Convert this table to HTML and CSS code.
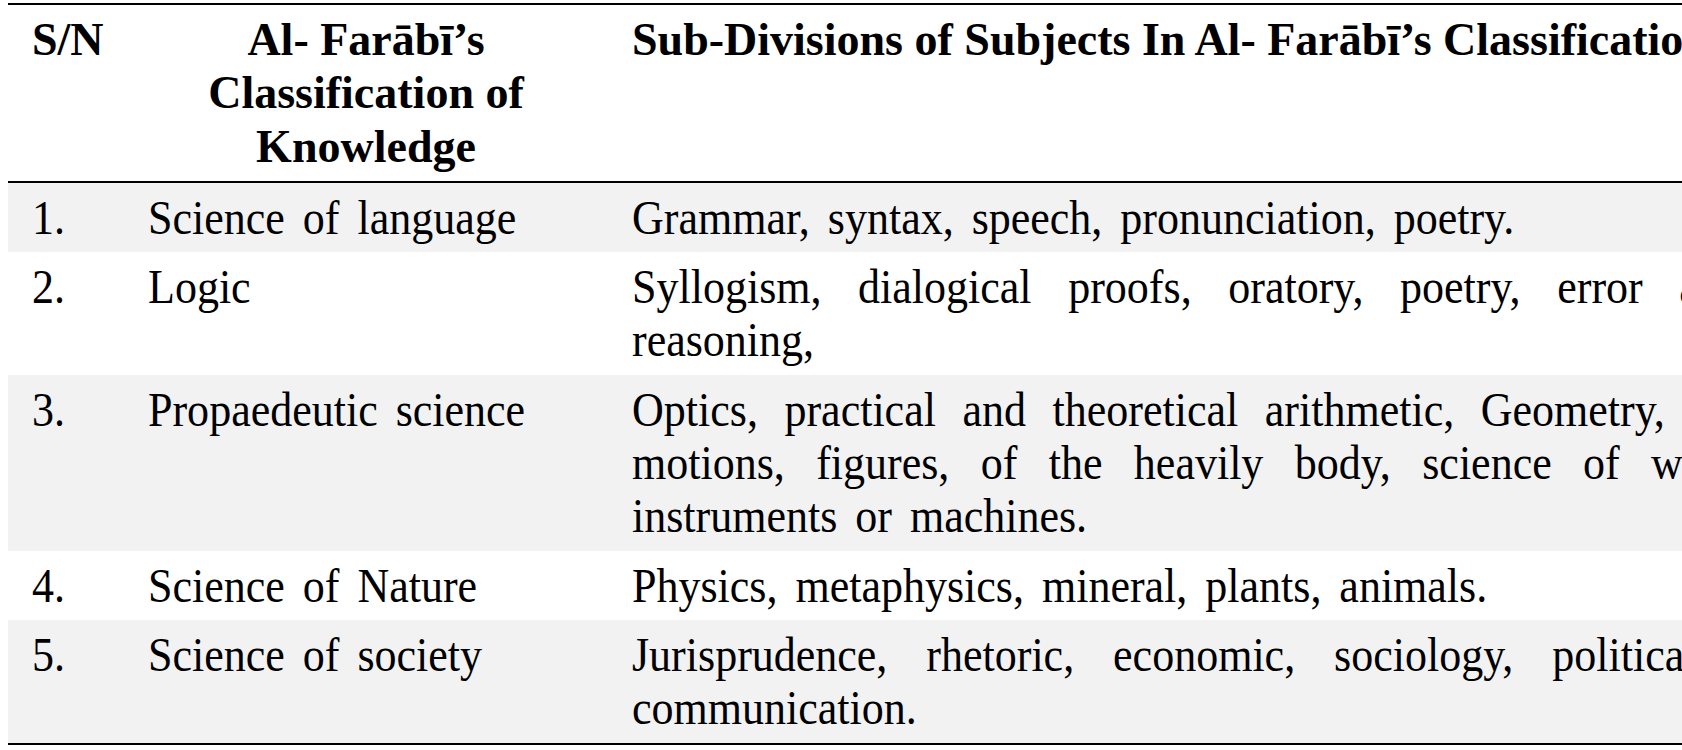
FILE: index.html
```html
<!DOCTYPE html>
<html lang="en">
<head>
<meta charset="utf-8">
<title>Al-Farābī's Classification of Knowledge</title>
<link rel="stylesheet" href="styles.css">
</head>
<body>
<table class="kt">
  <colgroup>
    <col class="c-sn">
    <col class="c-cls">
    <col class="c-sub">
  </colgroup>
  <thead>
    <tr class="head">
      <th class="h-sn">S/N</th>
      <th class="h-cls">Al- Farābī’s Classification of Knowledge</th>
      <th class="h-sub">Sub-Divisions of Subjects In Al- Farābī’s Classification</th>
    </tr>
  </thead>
  <tbody>
    <tr class="shade">
      <td><div class="cond cond-sn">1.</div></td>
      <td><div class="cond cond-cls">Science of language</div></td>
      <td><div class="cond cond-sub">Grammar, syntax, speech, pronunciation, poetry.</div></td>
    </tr>
    <tr>
      <td><div class="cond cond-sn">2.</div></td>
      <td><div class="cond cond-cls">Logic</div></td>
      <td><div class="cond cond-sub">Syllogism, dialogical proofs, oratory, poetry, error and a reasoning,</div></td>
    </tr>
    <tr class="shade">
      <td><div class="cond cond-sn">3.</div></td>
      <td><div class="cond cond-cls">Propaedeutic science</div></td>
      <td><div class="cond cond-sub">Optics, practical and theoretical arithmetic, Geometry, stellar motions, figures, of the heavily body, science of weights, instruments or machines.</div></td>
    </tr>
    <tr>
      <td><div class="cond cond-sn">4.</div></td>
      <td><div class="cond cond-cls">Science of Nature</div></td>
      <td><div class="cond cond-sub">Physics, metaphysics, mineral, plants, animals.</div></td>
    </tr>
    <tr class="shade">
      <td><div class="cond cond-sn">5.</div></td>
      <td><div class="cond cond-cls">Science of society</div></td>
      <td><div class="cond cond-sub">Jurisprudence, rhetoric, economic, sociology, political and communication.</div></td>
    </tr>
  </tbody>
</table>
</body>
</html>
```

FILE: styles.css
```css
html,
body {
  overflow: hidden;
  background: #ffffff;
}

body {
  margin: 3px 0 0 8px;
  font-family: "Liberation Serif", "Times New Roman", serif;
  color: #000000;
}

.kt {
  border-collapse: collapse;
  table-layout: fixed;
  width: 1815px;
  border-top: 2px solid #000000;
  border-bottom: 2px solid #000000;
}

.c-sn { width: 116px; }
.c-cls { width: 484px; }
.c-sub { width: 1215px; }

.kt th,
.kt td {
  padding: 8px 24px;
  vertical-align: top;
  line-height: 53.3px;
}

.head th {
  font-size: 46px;
  font-weight: bold;
  border-bottom: 2px solid #000000;
}

.h-sn { text-align: left; }
.h-cls { text-align: center; }
.h-sub { text-align: left; }

/* body copy: tall, slightly condensed Times-like type */
.cond {
  font-size: 48px;
  font-weight: normal;
  word-spacing: 7.6px;
  transform: scaleX(0.9167);
  transform-origin: 0 0;
}

.cond-sn {
  width: 74px;
  white-space: nowrap;
}

.cond-cls {
  width: 476px;
  white-space: nowrap;
}

.cond-sub {
  width: 1273px;
  text-align: justify;
}

.shade td {
  background: #f2f2f2;
}
```
